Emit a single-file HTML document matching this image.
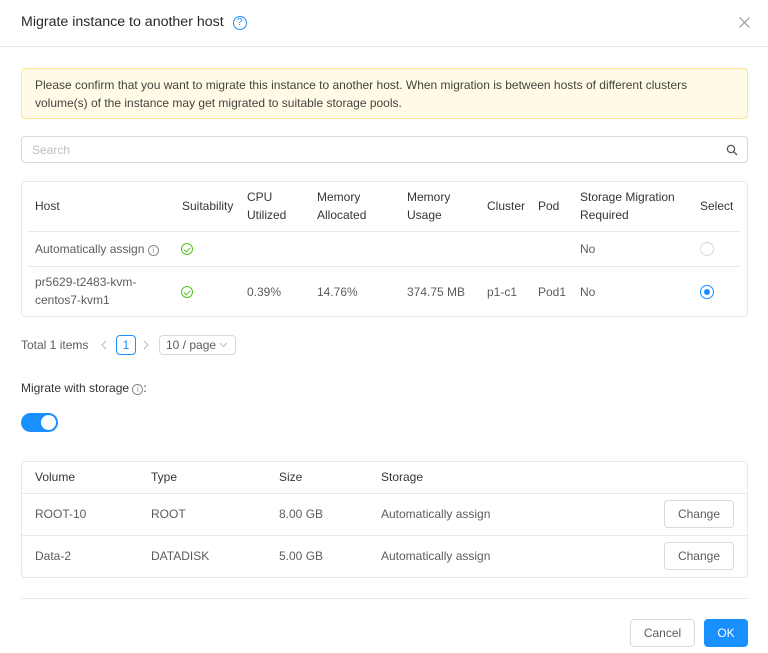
<!DOCTYPE html>
<html><head><style>
*{box-sizing:border-box;margin:0;padding:0}
body{width:768px;height:653px;background:#fff;font-family:"Liberation Sans",sans-serif;font-size:12px;color:rgba(0,0,0,.65);position:relative;overflow:hidden}
.abs{position:absolute}
.hdr{left:0;top:0;width:768px;height:47px;border-bottom:1px solid #e8e8e8}
.title{left:21px;top:14px;font-size:14.2px;color:rgba(0,0,0,.85)}
.alert{left:21px;top:68px;width:727px;height:51px;background:#fffbe6;border:1px solid #ffe58f;border-radius:4px;padding:7px 13px;line-height:18px;color:rgba(0,0,0,.75)}
.search{left:21px;top:136px;width:727px;height:27px;border:1px solid #d9d9d9;border-radius:4px;padding:6px 10px;color:#bfbfbf}
.box{border:1px solid #e8e8e8;border-radius:4px}
.line{height:1px;background:#e8e8e8}
.t{position:absolute;white-space:nowrap;line-height:18px}
.h{color:rgba(0,0,0,.8)}
.chk{position:absolute;width:12px;height:12px;border:1px solid #52c41a;border-radius:50%}
.chk:after{content:"";position:absolute;left:3px;top:1.5px;width:3px;height:5px;border:solid #52c41a;border-width:0 1.3px 1.3px 0;transform:rotate(45deg)}
.radio{position:absolute;width:14px;height:14px;border:1px solid #d9d9d9;border-radius:50%}
.radio.on{border-color:#1890ff}
.radio.on:after{content:"";position:absolute;left:3px;top:3px;width:6px;height:6px;border-radius:50%;background:#1890ff}
.info{display:inline-block;width:11px;height:11px;border:1px solid #888;border-radius:50%;font-size:8px;text-align:center;line-height:10px;vertical-align:0px;color:#888}
.btn{position:absolute;height:28px;border:1px solid #d9d9d9;border-radius:4px;text-align:center;line-height:26px;color:rgba(0,0,0,.65);background:#fff}
</style></head><body>
<div class="abs hdr"></div>
<div class="abs title">Migrate instance to another host <span style="display:inline-block;width:14px;height:14px;border:1.3px solid #1890ff;border-radius:50%;color:#1890ff;font-size:10px;text-align:center;line-height:12px;margin-left:5px;vertical-align:1px">?</span></div>
<svg class="abs" style="left:739px;top:17px" width="11" height="11" viewBox="0 0 11 11"><path d="M0.5 0.5L10.5 10.5M10.5 0.5L0.5 10.5" stroke="#999" stroke-width="1.2"/></svg>
<div class="abs alert">Please confirm that you want to migrate this instance to another host. When migration is between hosts of different clusters volume(s) of the instance may get migrated to suitable storage pools.</div>
<div class="abs search">Search</div>
<svg class="abs" style="left:726px;top:144px" width="12" height="12" viewBox="0 0 12 12"><circle cx="5" cy="5" r="3.6" fill="none" stroke="#555" stroke-width="1.3"/><path d="M7.7 7.7L11 11" stroke="#555" stroke-width="1.3"/></svg>

<div class="abs box" style="left:21px;top:181px;width:727px;height:136px"></div>
<div class="abs line" style="left:28px;top:231px;width:712px"></div>
<div class="abs line" style="left:28px;top:266px;width:712px"></div>
<div class="t h" style="left:35px;top:197px">Host</div>
<div class="t h" style="left:182px;top:197px">Suitability</div>
<div class="t h" style="left:247px;top:188px">CPU<br>Utilized</div>
<div class="t h" style="left:317px;top:188px">Memory<br>Allocated</div>
<div class="t h" style="left:407px;top:188px">Memory<br>Usage</div>
<div class="t h" style="left:487px;top:197px">Cluster</div>
<div class="t h" style="left:538px;top:197px">Pod</div>
<div class="t h" style="left:580px;top:188px">Storage Migration<br>Required</div>
<div class="t h" style="left:700px;top:197px">Select</div>
<div class="t" style="left:35px;top:240px">Automatically assign <span class="info">i</span></div>
<div class="chk" style="left:181px;top:243px"></div>
<div class="t" style="left:580px;top:240px">No</div>
<div class="radio" style="left:700px;top:242px"></div>
<div class="t" style="left:35px;top:273px">pr5629-t2483-kvm-<br>centos7-kvm1</div>
<div class="chk" style="left:181px;top:286px"></div>
<div class="t" style="left:247px;top:283px">0.39%</div>
<div class="t" style="left:317px;top:283px">14.76%</div>
<div class="t" style="left:407px;top:283px">374.75 MB</div>
<div class="t" style="left:487px;top:283px">p1-c1</div>
<div class="t" style="left:538px;top:283px">Pod1</div>
<div class="t" style="left:580px;top:283px">No</div>
<div class="radio on" style="left:700px;top:285px"></div>

<div class="t" style="left:21px;top:336px">Total 1 items</div>
<svg class="abs" style="left:101px;top:340px" width="6" height="10" viewBox="0 0 6 10"><path d="M5 1L1 5L5 9" fill="none" stroke="#bbb" stroke-width="1"/></svg>
<div class="abs" style="left:116px;top:335px;width:20px;height:20px;border:1px solid #1890ff;border-radius:4px;color:#1890ff;text-align:center;line-height:18px">1</div>
<svg class="abs" style="left:143px;top:340px" width="6" height="10" viewBox="0 0 6 10"><path d="M1 1L5 5L1 9" fill="none" stroke="#bbb" stroke-width="1"/></svg>
<div class="abs" style="left:159px;top:335px;width:77px;height:20px;border:1px solid #d9d9d9;border-radius:4px;padding-left:6px;line-height:18px">10 / page</div>
<svg class="abs" style="left:219px;top:342px" width="9" height="6" viewBox="0 0 9 6"><path d="M1 1L4.5 4.5L8 1" fill="none" stroke="#bbb" stroke-width="1"/></svg>

<div class="t h" style="left:21px;top:379px">Migrate with storage <span class="info">i</span>:</div>
<div class="abs" style="left:21px;top:413px;width:37px;height:19px;border-radius:10px;background:#1890ff"></div>
<div class="abs" style="left:41px;top:415px;width:15px;height:15px;border-radius:50%;background:#fff"></div>

<div class="abs box" style="left:21px;top:461px;width:727px;height:117px"></div>
<div class="abs line" style="left:22px;top:493px;width:725px"></div>
<div class="abs line" style="left:22px;top:535px;width:725px"></div>
<div class="t h" style="left:35px;top:468px">Volume</div>
<div class="t h" style="left:151px;top:468px">Type</div>
<div class="t h" style="left:279px;top:468px">Size</div>
<div class="t h" style="left:381px;top:468px">Storage</div>
<div class="t" style="left:35px;top:505px">ROOT-10</div>
<div class="t" style="left:151px;top:505px">ROOT</div>
<div class="t" style="left:279px;top:505px">8.00 GB</div>
<div class="t" style="left:381px;top:505px">Automatically assign</div>
<div class="btn" style="left:664px;top:500px;width:70px">Change</div>
<div class="t" style="left:35px;top:547px">Data-2</div>
<div class="t" style="left:151px;top:547px">DATADISK</div>
<div class="t" style="left:279px;top:547px">5.00 GB</div>
<div class="t" style="left:381px;top:547px">Automatically assign</div>
<div class="btn" style="left:664px;top:542px;width:70px">Change</div>

<div class="abs line" style="left:21px;top:598px;width:727px"></div>
<div class="btn" style="left:630px;top:619px;width:65px">Cancel</div>
<div class="btn" style="left:704px;top:619px;width:44px;background:#1890ff;border-color:#1890ff;color:#fff">OK</div>
</body></html>
